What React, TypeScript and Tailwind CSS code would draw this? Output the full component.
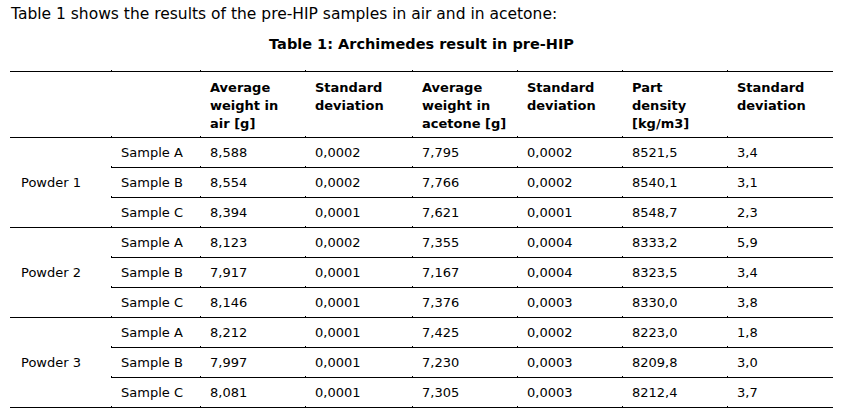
import React from "react";

const groups = [
  {
    name: "Powder 1",
    rows: [
      ["Sample A", "8,588", "0,0002", "7,795", "0,0002", "8521,5", "3,4"],
      ["Sample B", "8,554", "0,0002", "7,766", "0,0002", "8540,1", "3,1"],
      ["Sample C", "8,394", "0,0001", "7,621", "0,0001", "8548,7", "2,3"],
    ],
  },
  {
    name: "Powder 2",
    rows: [
      ["Sample A", "8,123", "0,0002", "7,355", "0,0004", "8333,2", "5,9"],
      ["Sample B", "7,917", "0,0001", "7,167", "0,0004", "8323,5", "3,4"],
      ["Sample C", "8,146", "0,0001", "7,376", "0,0003", "8330,0", "3,8"],
    ],
  },
  {
    name: "Powder 3",
    rows: [
      ["Sample A", "8,212", "0,0001", "7,425", "0,0002", "8223,0", "1,8"],
      ["Sample B", "7,997", "0,0001", "7,230", "0,0003", "8209,8", "3,0"],
      ["Sample C", "8,081", "0,0001", "7,305", "0,0003", "8212,4", "3,7"],
    ],
  },
];

const widths = ["w-[101px]", "w-[89px]", "w-[105px]", "w-[107px]", "w-[105px]", "w-[105px]", "w-[105px]", "w-[106px]"];

const headers = [
  "",
  "",
  "Average weight in air [g]",
  "Standard deviation",
  "Average weight in acetone [g]",
  "Standard deviation",
  "Part density [kg/m3]",
  "Standard deviation",
];

function Tick({ top }: { top?: boolean }) {
  return top ? (
    <span className="absolute left-0 -top-[2px] w-px h-px bg-black" />
  ) : (
    <span className="absolute left-0 bottom-0 w-px h-px bg-black" />
  );
}

export default function App() {
  return (
    <div className="w-[847px] h-[415px] bg-white text-black font-['DejaVu_Sans',sans-serif] text-[13px] overflow-hidden">
      <p className="pl-[11px] pt-[4px] text-[15.5px] leading-[20px]">
        Table 1 shows the results of the pre-HIP samples in air and in acetone:
      </p>
      <div className="ml-[10px] w-[823px]">
        <p className="text-center font-bold text-[14.5px] leading-[20px] mt-[10px]">
          Table 1: Archimedes result in pre-HIP
        </p>
        <table className="mt-[17px] w-[823px] border-collapse table-fixed">
          <colgroup>
            {widths.map((w, i) => (
              <col key={i} className={w} />
            ))}
          </colgroup>
          <thead>
            <tr className="h-[66px]">
              {headers.map((h, i) => (
                <th
                  key={i}
                  className="relative border-y border-black align-top text-left font-bold leading-[18px] pl-[10px] pr-[10px] pt-[7px]"
                >
                  {i > 0 && <Tick top />}
                  {i > 0 && <Tick />}
                  {h}
                </th>
              ))}
            </tr>
          </thead>
          <tbody>
            {groups.map((g) =>
              g.rows.map((r, ri) => (
                <tr key={g.name + ri} className="h-[30px]">
                  {ri === 0 && (
                    <td
                      rowSpan={3}
                      className="border-b border-black align-middle pl-[11px] pt-px"
                    >
                      {g.name}
                    </td>
                  )}
                  {r.map((c, ci) => (
                    <td
                      key={ci}
                      className="relative border-b border-black align-middle pl-[10px] pt-px"
                    >
                      <Tick />
                      {c}
                    </td>
                  ))}
                </tr>
              ))
            )}
          </tbody>
        </table>
      </div>
    </div>
  );
}
